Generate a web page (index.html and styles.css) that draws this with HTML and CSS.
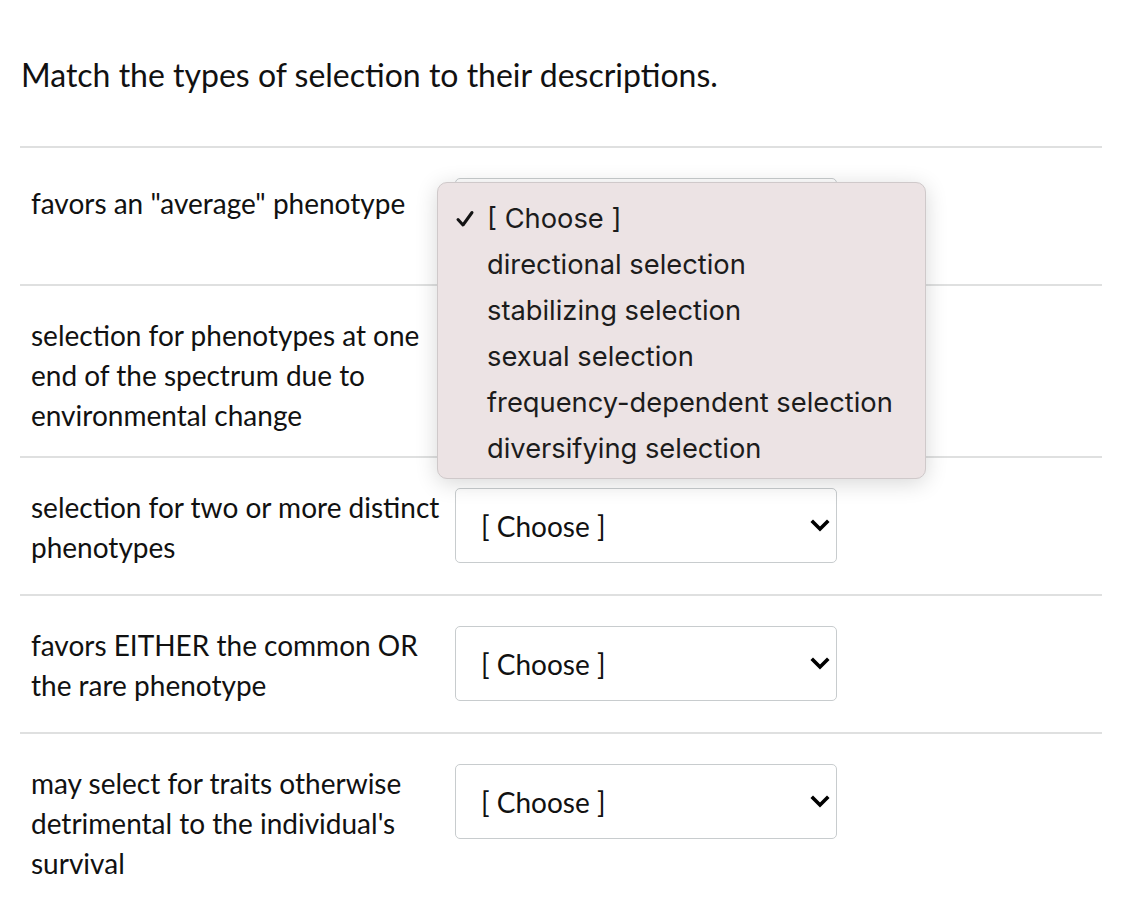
FILE: index.html
```html
<!DOCTYPE html>
<html>
<head>
<meta charset="utf-8">
<link rel="stylesheet" href="styles.css">
</head>
<body>
<div class="question">
  <h1 class="prompt">Match the types of selection to their descriptions.</h1>
  <div class="matches">
    <div class="row row-first">
      <div class="label">favors an "average" phenotype</div>
      <div class="select-wrap">
        <div class="select"><span class="select-text">[ Choose ]</span><svg class="chev" width="20" height="13" viewBox="0 0 20 13"><path d="M3 3 L10 10 L17 3" fill="none" stroke="#000" stroke-width="3.6" stroke-linecap="square"/></svg></div>
        <div class="menu">
          <div class="item"><svg class="check" width="20" height="18" viewBox="0 0 20 18"><path d="M3 9.5 L8 15 L17 2.5" fill="none" stroke="#141414" stroke-width="3" stroke-linecap="round" stroke-linejoin="round"/></svg>[ Choose ]</div>
          <div class="item">directional selection</div>
          <div class="item">stabilizing selection</div>
          <div class="item">sexual selection</div>
          <div class="item">frequency-dependent selection</div>
          <div class="item">diversifying selection</div>
        </div>
      </div>
    </div>
    <div class="row">
      <div class="label">selection for phenotypes at one end of the spectrum due to environmental change</div>
      <div class="select-wrap">
        <div class="select"><span class="select-text">[ Choose ]</span><svg class="chev" width="20" height="13" viewBox="0 0 20 13"><path d="M3 3 L10 10 L17 3" fill="none" stroke="#000" stroke-width="3.6" stroke-linecap="square"/></svg></div>
      </div>
    </div>
    <div class="row">
      <div class="label">selection for two or more distinct phenotypes</div>
      <div class="select-wrap">
        <div class="select"><span class="select-text">[ Choose ]</span><svg class="chev" width="20" height="13" viewBox="0 0 20 13"><path d="M3 3 L10 10 L17 3" fill="none" stroke="#000" stroke-width="3.6" stroke-linecap="square"/></svg></div>
      </div>
    </div>
    <div class="row">
      <div class="label">favors EITHER the common OR the rare phenotype</div>
      <div class="select-wrap">
        <div class="select"><span class="select-text">[ Choose ]</span><svg class="chev" width="20" height="13" viewBox="0 0 20 13"><path d="M3 3 L10 10 L17 3" fill="none" stroke="#000" stroke-width="3.6" stroke-linecap="square"/></svg></div>
      </div>
    </div>
    <div class="row">
      <div class="label">may select for traits otherwise detrimental to the individual's survival</div>
      <div class="select-wrap">
        <div class="select"><span class="select-text">[ Choose ]</span><svg class="chev" width="20" height="13" viewBox="0 0 20 13"><path d="M3 3 L10 10 L17 3" fill="none" stroke="#000" stroke-width="3.6" stroke-linecap="square"/></svg></div>
      </div>
    </div>
  </div>
</div>
</body>
</html>
```
FILE: styles.css
```css
html, body {
  margin: 0;
  padding: 0;
  background: #fff;
}
body {
  font-family: Lato, "Liberation Sans", sans-serif;
  color: #111;
}
.question {
  padding: 0 20px 0 20px;
}
.prompt {
  margin: 0;
  padding: 55px 0 0 1px;
  height: 146px;
  box-sizing: border-box;
  font-size: 32px;
  font-weight: 400;
  line-height: 40px;
  color: #111;
}
.matches {
  display: flex;
  flex-direction: column;
}
.row {
  display: flex;
  align-items: flex-start;
  border-top: 2px solid #dfe0e0;
  padding: 29px 0 21px 11px;
}
.label {
  width: 415px;
  font-size: 28px;
  line-height: 40px;
  color: #111;
}
.row-first .label {
  padding-top: 6px;
}
.select-wrap {
  position: relative;
  margin: 1px 0 10px 9px;
}
.select {
  width: 382px;
  height: 75px;
  box-sizing: border-box;
  border: 1px solid #c8ccce;
  border-radius: 5px;
  background: #fff;
  display: flex;
  align-items: center;
  justify-content: space-between;
  padding: 0 6px 0 25px;
}
.select-text {
  font-size: 28px;
  color: #111;
}
.chev {
  display: block;
}
.menu {
  position: absolute;
  left: -18px;
  top: 4px;
  width: 489px;
  height: 297px;
  box-sizing: border-box;
  background: #ece3e4;
  border: 1px solid #cfc9ca;
  border-radius: 10px;
  box-shadow: 0 4px 22px rgba(0, 0, 0, 0.16);
  padding: 13px 0 0 0;
  font-family: Inter, "Noto Sans", sans-serif;
  z-index: 5;
}
.item {
  height: 46px;
  line-height: 46px;
  font-size: 27.3px;
  color: #1c1c1c;
  padding-left: 49px;
  position: relative;
}
.check {
  position: absolute;
  left: 17px;
  top: 14px;
}
```
